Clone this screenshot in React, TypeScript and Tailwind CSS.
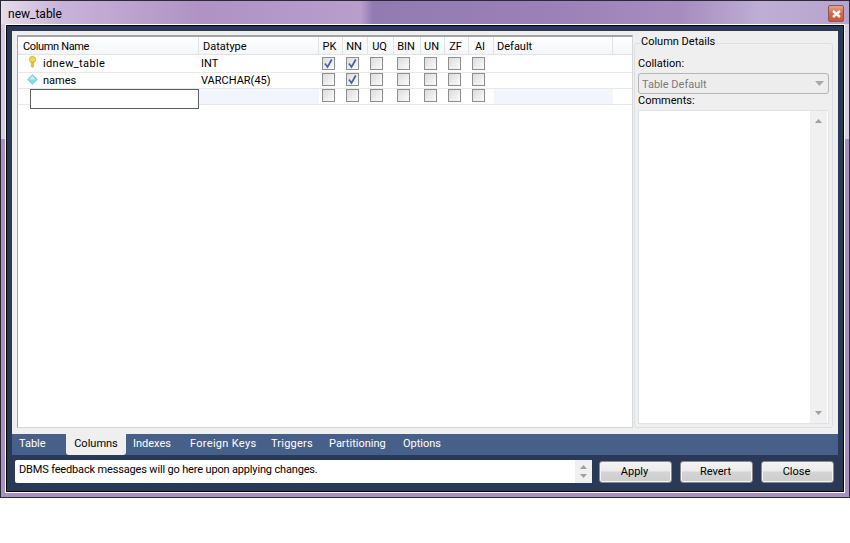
import * as React from "react";

const columns = [
  { name: "PK", w: "w-[24px]", box: "pl-[3px]" },
  { name: "NN", w: "w-[25px]", box: "pl-[3px]" },
  { name: "UQ", w: "w-[26px]", box: "pl-[2px]" },
  { name: "BIN", w: "w-[27px]", box: "pl-[3px]" },
  { name: "UN", w: "w-[24px]", box: "pl-[3px]" },
  { name: "ZF", w: "w-[24px]", box: "pl-[3px]" },
  { name: "AI", w: "w-[25px]", box: "pl-[3px]" },
];

const Check = ({ checked }: { checked?: boolean }) => (
  <span className="flex h-[13px] w-[13px] items-center justify-center border border-[#8e8f8f] bg-[linear-gradient(135deg,#dcdcdc,#fbfbfb)]">
    {checked && (
      <svg width="11" height="11" viewBox="0 0 11 11">
        <path d="M2 5.5 L4.5 9 L8.8 1.5" fill="none" stroke="#4a5f97" strokeWidth="1.7" />
      </svg>
    )}
  </span>
);

const Key = () => (
  <svg width="9" height="12" viewBox="0 0 9 13">
    <circle cx="4.5" cy="3.8" r="3.4" fill="#f5d94a" stroke="#c9a21c" strokeWidth="0.7" />
    <path d="M3.2 6.5 H5.8 V11 L4.5 12.5 L3.2 11 Z" fill="#e6bd2e" stroke="#c9a21c" strokeWidth="0.5" />
  </svg>
);

const Diamond = () => (
  <svg width="11" height="11" viewBox="0 0 11 11">
    <path d="M5.5 0.5 L10.5 5.5 L5.5 10.5 L0.5 5.5 Z" fill="#7fdde6" stroke="#8ab8c4" strokeWidth="0.6" />
    <path d="M5.5 2 L8.5 5.5 L5.5 5.5 L2.5 5.5 Z" fill="#c8f4f6" />
  </svg>
);

const Row = ({
  icon,
  name,
  type,
  checks,
  h,
  box,
  lh,
  nameClass,
  last,
}: {
  icon?: React.ReactNode;
  name?: string;
  type?: string;
  checks: number[];
  h: string;
  box: string;
  lh?: string;
  nameClass?: string;
  last?: boolean;
}) => (
  <div className={`flex ${h} border-b border-[#e8e8e8]`}>
    <div className="flex w-[181px] shrink-0">
      <span className="flex w-[25px] shrink-0 justify-center pl-[4px] pt-[1px]">{icon}</span>
      <span className={`${lh} ${nameClass}`}>{name}</span>
    </div>
    <div className={`w-[120px] shrink-0 pl-[2px] ${lh} ${last ? "bg-[#f2f5fb]" : ""}`}>{type}</div>
    {columns.map((c, i) => (
      <div key={c.name} className={`${c.w} ${c.box} ${box} shrink-0`}>
        <Check checked={checks.includes(i)} />
      </div>
    ))}
    <div className={`w-[119px] shrink-0 ${last ? "bg-[#f2f5fb]" : ""}`} />
  </div>
);

const TabLabel = ({ label, className }: { label: string; className: string }) => (
  <span className={`leading-[20px] text-white ${className}`}>{label}</span>
);

const Button = ({ label }: { label: string }) => (
  <button className="h-[22px] w-[73px] rounded-[3px] border border-[#8a8a8a] bg-[linear-gradient(#f3f3f3,#ebebeb_45%,#d4d4d4_50%,#cdcdcd)] pr-[2px] text-center leading-[20px] text-black shadow-[inset_0_0_0_1px_#f5f5f5]">
    {label}
  </button>
);

const ScrollArrow = ({ up }: { up?: boolean }) => (
  <svg width="7" height="4" viewBox="0 0 9 5">
    <path d={up ? "M4.5 0 L9 5 H0 Z" : "M0 0 H9 L4.5 5 Z"} fill="#a0a0a0" />
  </svg>
);

export default function App() {
  return (
    <div className="h-[543px] w-[850px] overflow-hidden bg-white font-['Roboto',sans-serif] text-[11px] text-black">
      {/* window frame */}
      <div className="flex h-[498px] w-[850px] flex-col border border-[#2a2a35] bg-[linear-gradient(#d8cce4_0px,#d8cce4_138px,#a98fc3_138px)]">
        <div className="flex h-[23px] shrink-0 items-start justify-between bg-[linear-gradient(90deg,#e6dcec_0px,#c8b3d8_60px,#ae93c4_200px,#b79ecd_360px,#927bb0_372px,#9a82b8_560px,#a68dc0_680px,#bfaed4_760px,#b7a3cc_849px)] pl-[7px] pr-[5px]">
          <span className="pt-[5px] text-[12px] leading-[16px]">new_table</span>
          <span className="mt-[4px] flex h-[17px] w-[16px] items-center justify-center rounded-[2px] border border-[#8c5a4a] bg-[linear-gradient(#e6a48e,#d4664a_50%,#c9583c)]">
            <svg width="9" height="8" viewBox="0 0 9 8">
              <path d="M1 1 L8 7 M8 1 L1 7" stroke="#fff" strokeWidth="2.4" />
            </svg>
          </span>
        </div>

        {/* client area with black / white keylines */}
        <div className="mx-[4px] mb-[4px] flex min-h-0 flex-1 flex-col border border-white">
          <div className="flex min-h-0 flex-1 flex-col border border-black bg-[#2a3a56] px-[5px] pt-[5px]">
            <div className="flex h-[403px] shrink-0 bg-[#efefef]">
              {/* columns grid */}
              <div className="ml-[5px] mt-[4px] h-[393px] w-[616px] shrink-0 border border-t-2 border-[#a5a5a5] border-r-[#d8d8d8] border-b-[#d8d8d8] bg-white">
                <div className="relative h-full">
                  <div className="flex h-[18px] border-b border-[#e3e3e3] bg-[linear-gradient(#ffffff,#f4f6f9)] leading-[20px]">
                    <div className="w-[181px] shrink-0 border-r border-[#e3e3e3] pl-[5px] tracking-[-0.35px]">Column Name</div>
                    <div className="w-[120px] shrink-0 border-r border-[#e3e3e3] pl-[4px]">Datatype</div>
                    {columns.map((c) => (
                      <div key={c.name} className={`${c.w} shrink-0 border-r border-[#e3e3e3] pr-[2px] text-center`}>
                        {c.name}
                      </div>
                    ))}
                    <div className="w-[119px] shrink-0 border-r border-[#e3e3e3] pl-[3px]">Default</div>
                  </div>
                  <Row
                    icon={<Key />}
                    name="idnew_table"
                    nameClass="tracking-[0.35px]"
                    type="INT"
                    checks={[0, 1]}
                    h="h-[18px]"
                    box="pt-[2px]"
                    lh="leading-[18px]"
                  />
                  <Row icon={<Diamond />} name="names" type="VARCHAR(45)" checks={[1]} h="h-[16px]" box="pt-[0px]" lh="leading-[15px]" />
                  <Row checks={[]} h="h-[16px]" box="pt-[0px]" lh="leading-[15px]" last />
                  {/* inline cell editor */}
                  <div className="absolute left-[12px] top-[52px] h-[20px] w-[169px] border border-[#5f5f5f] bg-white" />
                </div>
              </div>

              {/* column details */}
              <div className="relative ml-[1px] mt-[12px] h-[385px] w-[199px] shrink-0 rounded-[3px] border border-[#dcdfe3] px-[3px]">
                <span className="absolute -top-[9px] left-[5px] bg-[#efefef] px-[1px] leading-[14px]">Column Details</span>
                <div className="pt-[13px] leading-[14px]">Collation:</div>
                <div className="mt-[2px] flex h-[21px] items-center justify-between rounded-[3px] border border-[#b5b5b5] bg-[#ededed] pl-[3px] pr-[4px] text-[#7a7a7a]">
                  <span className="pt-[3px]">Table Default</span>
                  <svg width="9" height="5" viewBox="0 0 9 5">
                    <path d="M0 0 H9 L4.5 5 Z" fill="#a8a8a8" />
                  </svg>
                </div>
                <div className="leading-[14px]">Comments:</div>
                <div className="mt-[2px] flex h-[314px] justify-between border border-[#dfe3e8] bg-white pr-[1px]">
                  <div />
                  <div className="flex w-[17px] flex-col items-center justify-between bg-[#f0f0f0] py-[8px]">
                    <ScrollArrow up />
                    <ScrollArrow />
                  </div>
                </div>
              </div>
            </div>

            {/* editor tabs */}
            <div className="flex h-[21px] shrink-0 bg-[#47608a]">
              <TabLabel label="Table" className="ml-[7px] w-[47px]" />
              <span className="h-[21px] w-[60px] rounded-b-[3px] bg-[#efefef] text-center leading-[20px]">Columns</span>
              <TabLabel label="Indexes" className="ml-[7px] w-[57px]" />
              <TabLabel label="Foreign Keys" className="w-[81px] tracking-[0.3px]" />
              <TabLabel label="Triggers" className="w-[58px] tracking-[0.2px]" />
              <TabLabel label="Partitioning" className="w-[74px]" />
              <TabLabel label="Options" className="w-[60px]" />
            </div>

            {/* feedback + actions */}
            <div className="flex pl-[3px] pt-[5px]">
              <div className="flex h-[23px] w-[577px] justify-between rounded-l-[2px] bg-white pl-[4px] leading-[19px]">
                <span className="tracking-[-0.16px]">DBMS feedback messages will go here upon applying changes.</span>
                <div className="flex w-[17px] flex-col items-center justify-between bg-[#f0f0f0] py-[5px]">
                  <ScrollArrow up />
                  <ScrollArrow />
                </div>
              </div>
              <div className="ml-[7px] mt-[1px] flex gap-[8px]">
                <Button label="Apply" />
                <Button label="Revert" />
                <Button label="Close" />
              </div>
            </div>
          </div>
        </div>
      </div>
    </div>
  );
}
